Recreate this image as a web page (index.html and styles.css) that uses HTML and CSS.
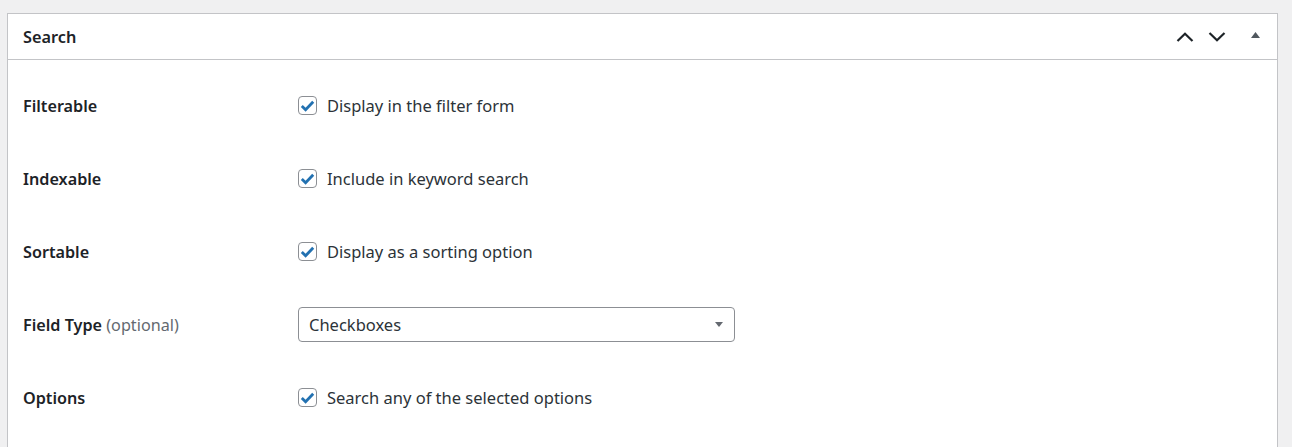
FILE: index.html
```html
<!DOCTYPE html>
<html lang="en">
<head>
    <meta charset="UTF-8">
    <title>Search</title>
    <link rel="stylesheet" href="styles.css">
</head>
<body>

<div class="postbox">
    <div class="postbox-header">
        <h2>Search</h2>
        <div class="handle-actions">
            <button class="handle-btn" aria-label="Move up">
                <svg width="18" height="10" viewBox="0 0 18 10"><polyline points="1.5,9 9,1.8 16.5,9" fill="none" stroke="#1d2327" stroke-width="2.2"/></svg>
            </button>
            <button class="handle-btn" aria-label="Move down">
                <svg width="18" height="10" viewBox="0 0 18 10"><polyline points="1.5,1 9,8.2 16.5,1" fill="none" stroke="#1d2327" stroke-width="2.2"/></svg>
            </button>
            <button class="handle-btn toggle" aria-label="Toggle panel">
                <svg width="9" height="6" viewBox="0 0 9 6"><polygon points="0,6 4.5,0 9,6" fill="#50575e"/></svg>
            </button>
        </div>
    </div>

    <div class="inside">
        <div class="field-row">
            <div class="field-label">Filterable</div>
            <label class="check"><span class="box"><svg width="15" height="12" viewBox="0 0 15 12"><polyline points="1.8,6 5.6,9.8 13.2,1.8" fill="none" stroke="#2271b1" stroke-width="2.8"/></svg></span>Display in the filter form</label>
        </div>
        <div class="field-row">
            <div class="field-label">Indexable</div>
            <label class="check"><span class="box"><svg width="15" height="12" viewBox="0 0 15 12"><polyline points="1.8,6 5.6,9.8 13.2,1.8" fill="none" stroke="#2271b1" stroke-width="2.8"/></svg></span>Include in keyword search</label>
        </div>
        <div class="field-row">
            <div class="field-label">Sortable</div>
            <label class="check"><span class="box"><svg width="15" height="12" viewBox="0 0 15 12"><polyline points="1.8,6 5.6,9.8 13.2,1.8" fill="none" stroke="#2271b1" stroke-width="2.8"/></svg></span>Display as a sorting option</label>
        </div>
        <div class="field-row">
            <div class="field-label">Field Type <span class="optional">(optional)</span></div>
            <div class="select">
                <span>Checkboxes</span>
                <svg width="8" height="5" viewBox="0 0 8 5"><polygon points="0,0 8,0 4,5" fill="#646970"/></svg>
            </div>
        </div>
        <div class="field-row">
            <div class="field-label">Options</div>
            <label class="check"><span class="box"><svg width="15" height="12" viewBox="0 0 15 12"><polyline points="1.8,6 5.6,9.8 13.2,1.8" fill="none" stroke="#2271b1" stroke-width="2.8"/></svg></span>Search any of the selected options</label>
        </div>
    </div>
</div>

</body>
</html>
```

FILE: styles.css
```css
body {
    margin: 0;
    background: #f0f0f1;
    color: #1d2327;
    font-family: "Noto Sans", "Open Sans", sans-serif;
    font-size: 16px;
}
.postbox {
    margin: 13px 14px 0 7px;
    height: 434px;
    background: #fff;
    border: 1px solid #c3c4c7;
    border-bottom: none;
}
.postbox-header {
    display: flex;
    align-items: center;
    justify-content: space-between;
    height: 45px;
    padding: 0 0 0 15px;
    border-bottom: 1px solid #c3c4c7;
}
.postbox-header h2 {
    margin: 0;
    font-size: 16.3px;
    font-weight: 600;
}
.handle-actions {
    display: flex;
    align-items: center;
}
.handle-btn {
    display: flex;
    align-items: center;
    justify-content: center;
    width: 32px;
    height: 32px;
    padding: 0;
    background: none;
    border: none;
    cursor: pointer;
}
.handle-btn.toggle {
    width: 44px;
    margin-bottom: 4px;
}
.inside {
    padding: 9px 15px 0;
}
.field-row {
    display: flex;
    align-items: center;
    height: 73px;
}
.field-label {
    width: 275px;
    font-size: 16.2px;
    font-weight: 600;
}
.optional {
    font-weight: 400;
    color: #646970;
}
.check {
    display: flex;
    align-items: center;
    gap: 10px;
    font-size: 16.5px;
    color: #2c3338;
}
.box {
    display: flex;
    align-items: center;
    justify-content: center;
    box-sizing: border-box;
    width: 19px;
    height: 19px;
    border: 1px solid #8c8f94;
    border-radius: 4px;
}
.select {
    display: flex;
    align-items: center;
    justify-content: space-between;
    box-sizing: border-box;
    width: 437px;
    height: 35px;
    padding: 0 11px 0 10px;
    border: 1px solid #8c8f94;
    border-radius: 4px;
    font-size: 16.5px;
    color: #2c3338;
}
```
